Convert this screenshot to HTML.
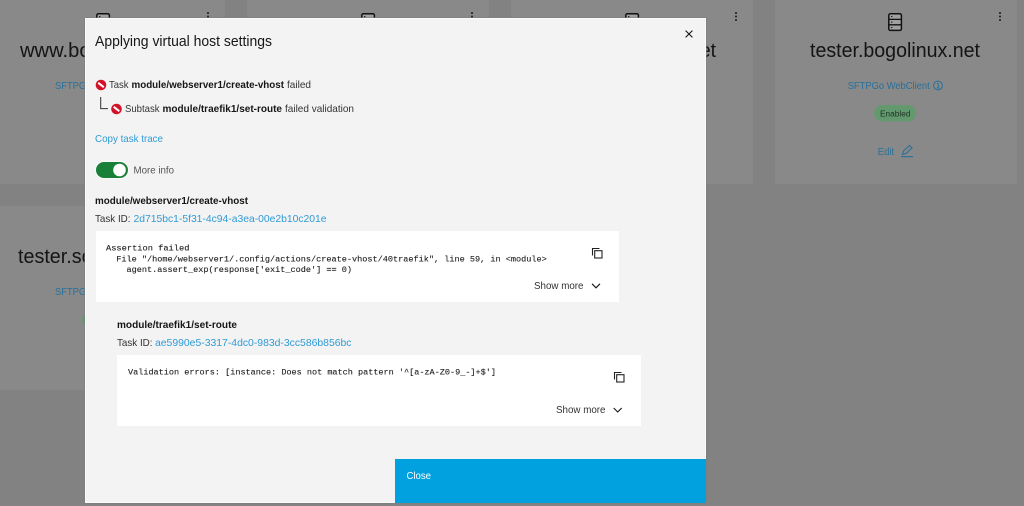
<!DOCTYPE html>
<html><head><meta charset="utf-8"><title>Applying virtual host settings</title>
<style>
html,body{margin:0;padding:0;width:1024px;height:506px;overflow:hidden;background:#828282}
svg{display:block}
text{font-family:"Liberation Sans",sans-serif;white-space:pre}
.m{font-family:"Liberation Mono",monospace;font-size:8.7px;fill:#1f1f1f;stroke:#1f1f1f;stroke-width:.12px}
.t{font-size:10.2px;fill:#333}
.b{font-size:10.2px;font-weight:bold;fill:#161616}
.l{font-size:10.2px;fill:#2f9bd6}
.h{font-size:20px;fill:#141414}
.bl{font-size:10.4px;fill:#28709a}
</style></head><body>
<svg width="1024" height="506" viewBox="0 0 1024 506" xmlns="http://www.w3.org/2000/svg">
<defs>
<g id="srv">
<rect x="0.8" y="0.8" width="12.6" height="16.6" rx="1.5" fill="#a0a0a0" stroke="#111" stroke-width="1.5"/>
<path d="M1 6.4H13.4M1 11.8H13.4" stroke="#111" stroke-width="1.3" fill="none"/>
<path d="M3 3.6H4.4M3 9.1H4.4M3 14.6H4.4" stroke="#111" stroke-width="1" fill="none"/>
</g>
<g id="dots" fill="#1c1c1c"><circle cx="0" cy="0" r="1"/><circle cx="0" cy="3.5" r="1"/><circle cx="0" cy="7" r="1"/></g>
<g id="err"><circle r="5.3" fill="#d3122a"/><path d="M-2.8-2.2L2.8 2.2" stroke="#fff" stroke-width="2"/></g>
<g id="copy" fill="none" stroke="#222" stroke-width="1.1"><rect x="2.7" y="2.7" width="7.3" height="7.3"/><path d="M0.5 7.5V0.5H7.5"/></g>
<path id="chev" d="M-4-2L0 2L4-2" fill="none" stroke="#161616" stroke-width="1.1"/>
</defs>

<rect width="1024" height="506" fill="#828282"/>
<rect x="-17" y="-10" width="242" height="194" fill="#898989"/>
<rect x="247" y="-10" width="242" height="194" fill="#898989"/>
<rect x="511" y="-10" width="242" height="194" fill="#898989"/>
<rect x="775" y="-10" width="242" height="194" fill="#898989"/>
<rect x="-17" y="206" width="242" height="184" fill="#898989"/>

<use href="#srv" x="96" y="13"/><use href="#srv" x="361" y="13"/><use href="#srv" x="625" y="13"/><use href="#srv" x="888" y="13"/>
<use href="#dots" x="208" y="13"/><use href="#dots" x="472" y="13"/><use href="#dots" x="736" y="13"/><use href="#dots" x="1000" y="13"/>

<text class="h" x="20" y="57" textLength="168" lengthAdjust="spacingAndGlyphs">www.bogolinux.net</text>
<text class="h" x="548" y="57" textLength="168" lengthAdjust="spacingAndGlyphs">tester.bogolinux.net</text>
<text class="h" x="810" y="57" textLength="170" lengthAdjust="spacingAndGlyphs">tester.bogolinux.net</text>
<text class="bl" x="55" y="89" textLength="82" lengthAdjust="spacingAndGlyphs">SFTPGo WebClient</text>
<text class="bl" x="847.7" y="89" textLength="82" lengthAdjust="spacingAndGlyphs">SFTPGo WebClient</text>
<circle cx="938" cy="85.5" r="4.4" fill="none" stroke="#28709a" stroke-width="1"/>
<path d="M937 83.5H938.2V88M936.8 88H939.4" fill="none" stroke="#28709a" stroke-width="0.9"/>
<rect x="874" y="105" width="42" height="16.5" rx="8.2" fill="#64986f"/>
<text x="880" y="116.3" font-size="8.6" fill="#1c3322" textLength="30.5" lengthAdjust="spacingAndGlyphs">Enabled</text>
<text class="bl" x="877.7" y="155" textLength="16.5" lengthAdjust="spacingAndGlyphs">Edit</text>
<path d="M902.5 154.5L903.5 151L909.5 145.5L912 148L906 153.5ZM901 156.7H913" fill="none" stroke="#28709a" stroke-width="1.1"/>

<text class="h" x="18" y="263" textLength="170" lengthAdjust="spacingAndGlyphs">tester.sogolinux.net</text>
<text class="bl" x="55" y="295" textLength="82" lengthAdjust="spacingAndGlyphs">SFTPGo WebClient</text>
<rect x="82" y="313" width="42" height="13" rx="6.5" fill="#64986f"/>

<!-- modal -->
<rect x="84.5" y="17.5" width="622" height="486" fill="#7c7c7c"/>
<rect x="85" y="18" width="621" height="485" fill="#fbfbfb"/>
<rect x="86" y="19" width="619" height="483" fill="#f3f3f3"/>

<text x="95" y="46" font-size="14.6" fill="#161616" textLength="177" lengthAdjust="spacingAndGlyphs">Applying virtual host settings</text>
<path d="M685.6 30.6L692.4 37.4M692.4 30.6L685.6 37.4" stroke="#161616" stroke-width="1.1"/>

<use href="#err" x="101" y="85"/>
<text class="t" x="109" y="88" textLength="19.5" lengthAdjust="spacingAndGlyphs">Task</text>
<text class="b" x="131.5" y="88" textLength="152.5" lengthAdjust="spacingAndGlyphs">module/webserver1/create-vhost</text>
<text class="t" x="287" y="88" textLength="24" lengthAdjust="spacingAndGlyphs">failed</text>

<path d="M100.7 97V108.6H108" fill="none" stroke="#333" stroke-width="1"/>
<use href="#err" x="116.5" y="109"/>
<text class="t" x="125" y="112" textLength="34.5" lengthAdjust="spacingAndGlyphs">Subtask</text>
<text class="b" x="162.5" y="112" textLength="119.5" lengthAdjust="spacingAndGlyphs">module/traefik1/set-route</text>
<text class="t" x="285" y="112" textLength="69" lengthAdjust="spacingAndGlyphs">failed validation</text>

<text class="l" x="95" y="142" textLength="68" lengthAdjust="spacingAndGlyphs">Copy task trace</text>

<rect x="95" y="161" width="34" height="18" rx="9" fill="#fafafa"/>
<rect x="96" y="162" width="32" height="16" rx="8" fill="#198038"/>
<circle cx="119.5" cy="170" r="6.3" fill="#fff"/>
<text x="133.5" y="173.5" font-size="10.2" fill="#555" textLength="40.5" lengthAdjust="spacingAndGlyphs">More info</text>

<text class="b" x="95" y="204" textLength="153" lengthAdjust="spacingAndGlyphs">module/webserver1/create-vhost</text>
<text class="t" x="95" y="222" textLength="35.5" lengthAdjust="spacingAndGlyphs">Task ID:</text>
<text class="l" x="133.5" y="222" textLength="193" lengthAdjust="spacingAndGlyphs">2d715bc1-5f31-4c94-a3ea-00e2b10c201e</text>

<rect x="96" y="231" width="523" height="71" fill="#fff"/>
<text class="m" x="106" y="250.5">Assertion failed</text>
<text class="m" x="116.3" y="261.3" textLength="430.5" lengthAdjust="spacingAndGlyphs">File "/home/webserver1/.config/actions/create-vhost/40traefik", line 59, in &lt;module&gt;</text>
<text class="m" x="126.5" y="272.2" textLength="225.5" lengthAdjust="spacingAndGlyphs">agent.assert_exp(response['exit_code'] == 0)</text>
<use href="#copy" x="592" y="248"/>
<text class="t" x="534" y="289" textLength="49.5" lengthAdjust="spacingAndGlyphs">Show more</text>
<use href="#chev" x="596" y="285.8"/>

<text class="b" x="117" y="328" textLength="120" lengthAdjust="spacingAndGlyphs">module/traefik1/set-route</text>
<text class="t" x="117" y="346" textLength="35.5" lengthAdjust="spacingAndGlyphs">Task ID:</text>
<text class="l" x="155" y="346" textLength="196.5" lengthAdjust="spacingAndGlyphs">ae5990e5-3317-4dc0-983d-3cc586b856bc</text>

<rect x="117" y="355" width="524" height="71" fill="#fff"/>
<text class="m" x="128" y="374.5" textLength="368" lengthAdjust="spacingAndGlyphs">Validation errors: [instance: Does not match pattern '^[a-zA-Z0-9_-]+$']</text>
<use href="#copy" x="614" y="372"/>
<text class="t" x="556" y="413" textLength="49.5" lengthAdjust="spacingAndGlyphs">Show more</text>
<use href="#chev" x="617.7" y="410"/>

<rect x="395" y="459" width="311" height="44" fill="#00a1de"/>
<text x="406.5" y="479" font-size="10.2" fill="#fff" textLength="24.5" lengthAdjust="spacingAndGlyphs">Close</text>
</svg>
</body></html>
